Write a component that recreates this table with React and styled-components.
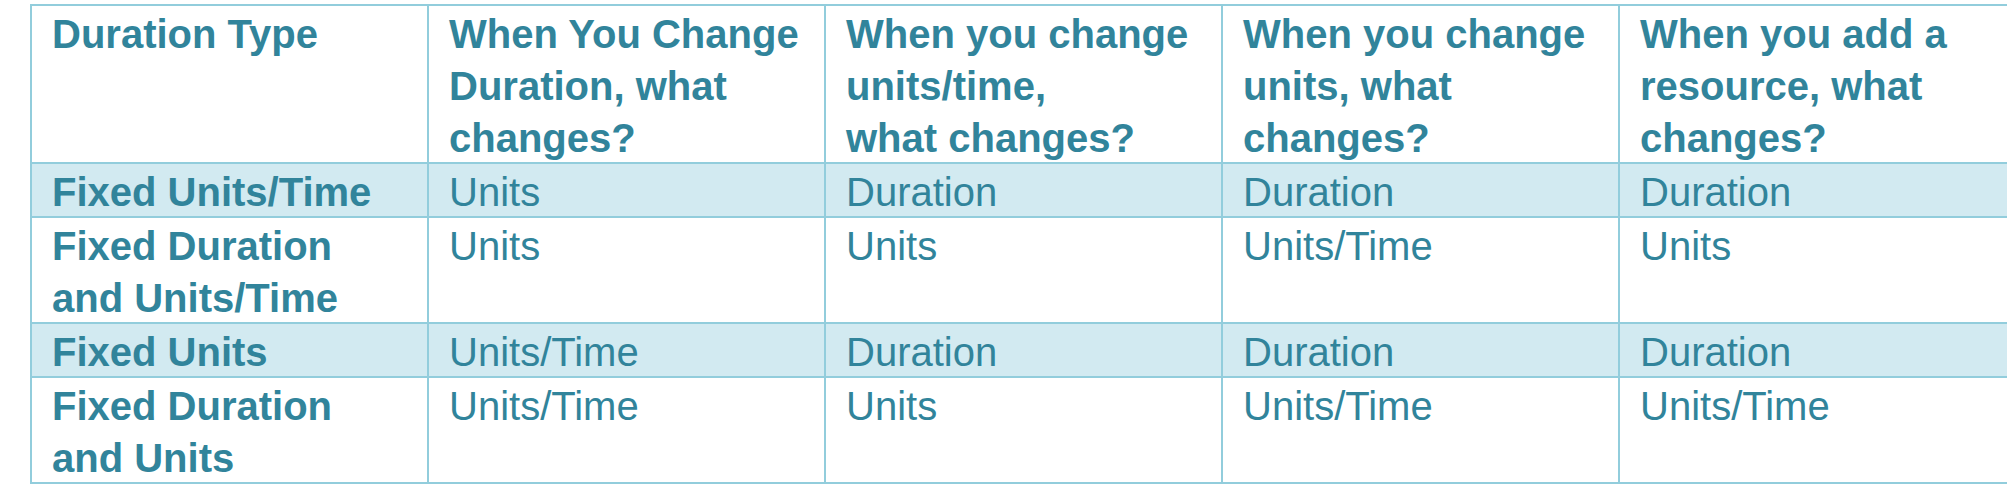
import React from "react";
import styled, { createGlobalStyle } from "styled-components";

const GlobalStyle = createGlobalStyle`
  html, body {
    margin: 0;
    padding: 0;
    background: #ffffff;
    overflow: hidden;
  }
  body {
    font-family: "Liberation Sans", Arial, sans-serif;
  }
`;

const Page = styled.div`
  padding: 4px 0 0 30px;
  width: 2100px;
`;

const Table = styled.table`
  border-collapse: collapse;
  table-layout: fixed;
  width: 1987px;
  color: #31849b;
  font-family: "Liberation Sans", Arial, sans-serif;
  font-size: 40px;
  line-height: 52px;
`;

const Col = styled.col`
  width: 397px;
`;

const Row = styled.tr`
  background: ${(p) => (p.$shaded ? "#d2eaf1" : "#ffffff")};
`;

const Cell = styled.td`
  border: 2px solid #92cddc;
  padding: 0 20px;
  vertical-align: top;
  text-align: left;
  font-weight: ${(p) => (p.$bold ? 700 : 400)};
`;

const HeadCell = styled.th`
  border: 2px solid #92cddc;
  padding: 0 20px;
  vertical-align: top;
  text-align: left;
  font-weight: 700;
`;

const Text = styled.span`
  display: block;
  margin: 2px 0 -2px;
`;

const headers = [
  ["Duration Type"],
  ["When You Change", "Duration, what", "changes?"],
  ["When you change", "units/time,", "what changes?"],
  ["When you change", "units, what", "changes?"],
  ["When you add a", "resource, what", "changes?"],
];

const rows = [
  { type: ["Fixed Units/Time"], values: ["Units", "Duration", "Duration", "Duration"], shaded: true },
  { type: ["Fixed Duration", "and Units/Time"], values: ["Units", "Units", "Units/Time", "Units"], shaded: false },
  { type: ["Fixed Units"], values: ["Units/Time", "Duration", "Duration", "Duration"], shaded: true },
  { type: ["Fixed Duration", "and Units"], values: ["Units/Time", "Units", "Units/Time", "Units/Time"], shaded: false },
];

const Lines = ({ lines }) => (
  <Text>
    {lines.map((l, i) => (
      <React.Fragment key={i}>
        {i > 0 && <br />}
        {l}
      </React.Fragment>
    ))}
  </Text>
);

export default function App() {
  return (
    <>
      <GlobalStyle />
      <Page>
        <Table>
          <colgroup>
            {headers.map((_, i) => (
              <Col key={i} />
            ))}
          </colgroup>
          <thead>
            <Row>
              {headers.map((h, i) => (
                <HeadCell key={i}>
                  <Lines lines={h} />
                </HeadCell>
              ))}
            </Row>
          </thead>
          <tbody>
            {rows.map((r, i) => (
              <Row key={i} $shaded={r.shaded}>
                <Cell $bold>
                  <Lines lines={r.type} />
                </Cell>
                {r.values.map((v, j) => (
                  <Cell key={j}>
                    <Lines lines={[v]} />
                  </Cell>
                ))}
              </Row>
            ))}
          </tbody>
        </Table>
      </Page>
    </>
  );
}
